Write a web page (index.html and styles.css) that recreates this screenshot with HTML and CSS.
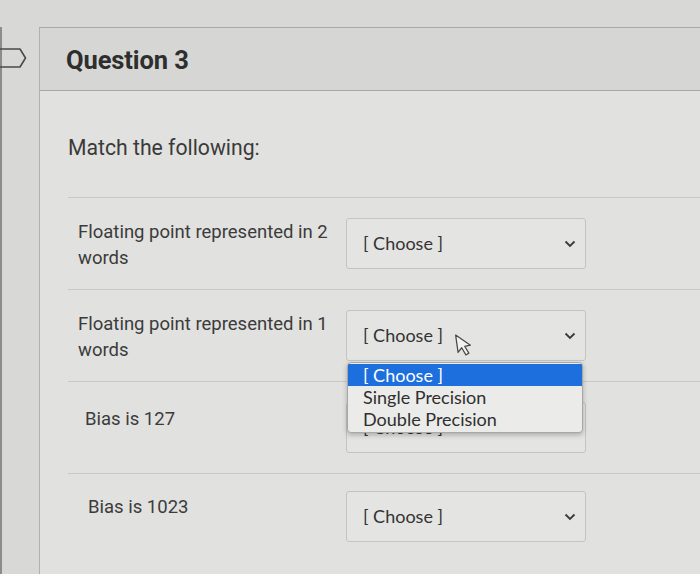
FILE: index.html
```
<!DOCTYPE html>
<html lang="en">
<head>
<meta charset="utf-8">
<title>Question 3</title>
<link rel="stylesheet" href="styles.css">
</head>
<body>
<div class="page">
  <div class="gutter">
    <svg class="flag" width="28" height="22" viewBox="0 0 28 22">
      <path d="M-2 2 H20 L25.5 11 L20 20 H-2" fill="none" stroke="#4a4a4a" stroke-width="1.6" stroke-linejoin="round"/>
    </svg>
  </div>
  <div class="card">
    <div class="card-header">
      <h2 class="title">Question 3</h2>
    </div>
    <div class="card-body">
      <p class="prompt">Match the following:</p>
      <div class="rows">
        <div class="row">
          <div class="label">Floating point represented in 2 words</div>
          <div class="select-wrap">
            <div class="select"><span>[ Choose ]</span><svg class="chev" width="12" height="8" viewBox="0 0 12 8"><path d="M1.5 1.5 L6 6 L10.5 1.5" fill="none" stroke="#3a3a3a" stroke-width="1.8"/></svg></div>
          </div>
        </div>
        <div class="row">
          <div class="label">Floating point represented in 1 words</div>
          <div class="select-wrap open">
            <div class="select"><span>[ Choose ]</span><svg class="chev" width="12" height="8" viewBox="0 0 12 8"><path d="M1.5 1.5 L6 6 L10.5 1.5" fill="none" stroke="#3a3a3a" stroke-width="1.8"/></svg></div>
            <svg class="cursor" width="19" height="26" viewBox="0 0 18 24">
              <path d="M2 1.5 L2 18 L6 14.2 L9 21.5 L12 20.2 L9 13.2 L14.5 13 Z" fill="#f2f2f0" stroke="#4a4a4a" stroke-width="1.2" stroke-linejoin="round"/>
            </svg>
            <ul class="dropdown">
              <li class="active">[ Choose ]</li>
              <li>Single Precision</li>
              <li>Double Precision</li>
            </ul>
          </div>
        </div>
        <div class="row">
          <div class="label label-single">Bias is 127</div>
          <div class="select-wrap">
            <div class="select"><span>[ Choose ]</span><svg class="chev" width="12" height="8" viewBox="0 0 12 8"><path d="M1.5 1.5 L6 6 L10.5 1.5" fill="none" stroke="#3a3a3a" stroke-width="1.8"/></svg></div>
          </div>
        </div>
        <div class="row row-last">
          <div class="label label-single">Bias is 1023</div>
          <div class="select-wrap">
            <div class="select"><span>[ Choose ]</span><svg class="chev" width="12" height="8" viewBox="0 0 12 8"><path d="M1.5 1.5 L6 6 L10.5 1.5" fill="none" stroke="#3a3a3a" stroke-width="1.8"/></svg></div>
          </div>
        </div>
      </div>
    </div>
  </div>
</div>
</body>
</html>
```

FILE: styles.css
```
html, body {
  margin: 0;
  padding: 0;
  height: 100%;
  overflow: hidden;
}

body {
  background: #d8d8d6;
  font-family: Roboto, "Liberation Sans", sans-serif;
  color: #393939;
}

.page {
  display: flex;
  height: 100%;
  padding-top: 27px;
  box-sizing: border-box;
}

.gutter {
  width: 39px;
  flex: none;
  border-left: 2px solid #8c8c8a;
  box-sizing: border-box;
}

.flag {
  display: block;
  margin-top: 20px;
  margin-left: -2px;
}

.card {
  flex: 1;
  border-top: 1px solid #a9a9a7;
  border-left: 1px solid #b0b0ae;
  background: #e1e1df;
}

.card-header {
  height: 62px;
  background: #d6d6d4;
  border-bottom: 1px solid #a6a6a4;
  display: flex;
  align-items: center;
  padding-left: 26px;
}

.title {
  margin: 0;
  font-size: 25.5px;
  font-weight: 700;
  color: #2e2e2e;
  letter-spacing: -0.1px;
  padding-top: 1px;
}

.card-body {
  padding-left: 28px;
}

.prompt {
  margin: 0;
  padding-top: 45px;
  height: 61px;
  font-size: 21.2px;
  line-height: 24px;
  color: #3a3a3a;
}

.rows {
  display: flex;
  flex-direction: column;
}

.row {
  display: flex;
  align-items: flex-start;
  border-top: 1px solid #c9c9c7;
  padding-top: 20px;
  height: 92px;
  box-sizing: border-box;
}

.row-last {
  padding-top: 17px;
}

.label {
  width: 268px;
  margin-left: 10px;
  font-size: 18.5px;
  line-height: 26px;
  color: #3b3b3b;
  padding-top: 1px;
}

.label-single {
  margin-left: 17px;
  width: 261px;
  padding-top: 4px;
}

.row-last .label-single {
  padding-top: 3px;
  margin-left: 20px;
  width: 258px;
}

.select-wrap {
  position: relative;
  width: 240px;
}

.select-wrap.open {
  z-index: 5;
}

.select {
  height: 51px;
  box-sizing: border-box;
  border: 1px solid #c4c4c2;
  border-radius: 3px;
  background: #e4e4e2;
  display: flex;
  align-items: center;
  justify-content: space-between;
  padding: 0 9px 0 16px;
  font-family: Lato, "Liberation Sans", sans-serif;
  font-size: 18px;
  color: #333;
}

.select span {
  padding-bottom: 2px;
}

.chev {
  display: block;
}

.cursor {
  position: absolute;
  left: 109px;
  top: 22px;
  transform: rotate(-8deg);
}

.dropdown {
  position: absolute;
  left: 1px;
  top: 52px;
  width: 234px;
  margin: 0;
  padding: 1px 0 2px;
  list-style: none;
  background: #ebebe9;
  border: 1px solid #a8a8a6;
  border-radius: 4px;
  box-shadow: 0 2px 5px rgba(0, 0, 0, 0.25);
  font-family: Lato, "Liberation Sans", sans-serif;
  font-size: 18px;
  line-height: 22px;
  color: #2f2f2f;
  overflow: hidden;
}

.dropdown li {
  padding-left: 15px;
}

.dropdown li.active {
  background: #1c6fdc;
  color: #ffffff;
}
```
